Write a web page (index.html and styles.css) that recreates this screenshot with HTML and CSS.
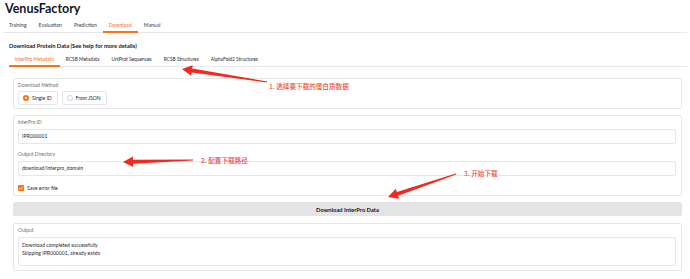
FILE: index.html
```html
<!DOCTYPE html>
<html lang="en">
<head>
    <meta charset="UTF-8">
    <meta name="viewport" content="width=device-width, initial-scale=1.0">
    <title>VenusFactory</title>
    <link rel="stylesheet" href="styles.css">
</head>
<body>

    <div class="app">
        <h1 class="title">VenusFactory</h1>

        <nav class="tabs">
            <span class="tab">Training</span>
            <span class="tab">Evaluation</span>
            <span class="tab">Prediction</span>
            <span class="tab active">Download</span>
            <span class="tab">Manual</span>
        </nav>

        <div class="section">
            <h2 class="heading">Download Protein Data (See help for more details)</h2>

            <nav class="subtabs">
                <span class="subtab active">InterPro Metadata</span>
                <span class="subtab">RCSB Metadata</span>
                <span class="subtab">UniProt Sequences</span>
                <span class="subtab">RCSB Structures</span>
                <span class="subtab">AlphaFold2 Structures</span>
            </nav>

            <div class="panel">
                <!-- download method -->
                <div class="box">
                    <div class="label">Download Method</div>
                    <div class="radios">
                        <label class="radio checked"><span class="dot"></span>Single ID</label>
                        <label class="radio"><span class="dot"></span>From JSON</label>
                    </div>
                </div>

                <!-- id + output dir -->
                <div class="box">
                    <div class="label">InterPro ID</div>
                    <div class="input">IPR000001</div>
                    <div class="label spaced">Output Directory</div>
                    <div class="input">download/interpro_domain</div>
                    <label class="check"><span class="checkbox">
                        <svg viewBox="0 0 6 6" width="6" height="6"><path d="M1.3 3.1 L2.5 4.3 L4.8 1.8" fill="none" stroke="#fff" stroke-width="0.9"/></svg>
                    </span>Save error file</label>
                </div>

                <button class="run">Download InterPro Data</button>

                <div class="box output">
                    <div class="label">Output</div>
                    <div class="textarea">Download completed successfully<br>Skipping IPR000001, already exists</div>
                </div>
            </div>
        </div>
    </div>

    <!-- annotation arrows drawn over the screenshot -->
    <svg class="notes" viewBox="0 0 690 279" width="690" height="279">
        <polygon points="267.1,81.5 192.2,68.5 192.7,65.2 182,69 191.2,75.8 191.6,72.5 266.9,82.5" />
        <polygon points="193,159.5 132.9,159.7 132.9,156.5 123,162 133.2,166.9 133.1,163.7 193,160.5" />
        <polygon points="455.8,173.5 396.9,191.9 395.8,188.8 388,197 399.2,198.8 398.1,195.7 456.2,174.5" />
        <text x="269" y="88.5">1. 选择要下载的蛋白质数据</text>
        <text x="201" y="162.5">2. 配置下载路径</text>
        <text x="464" y="175.5">3. 开始下载</text>
    </svg>

</body>
</html>
```

FILE: styles.css
```css
body {
    margin: 0;
    padding: 0;
    background: #fff;
    color: #1f2937;
    font-family: Lato, "Liberation Sans", sans-serif;
    position: relative;
    width: 690px;
    height: 279px;
    overflow: hidden;
}

.app {
    padding: 0 3px 0 5px;
}

.title {
    margin: 0;
    padding-top: 2px;
    font-size: 12.5px;
    line-height: 14px;
    font-weight: bold;
    color: #111827;
}

.tabs {
    display: flex;
    margin: 3px 0 0 -2px;
    border-bottom: 1px solid #e5e7eb;
}

.tab {
    font-size: 5.1px;
    line-height: 12px;
    padding: 0 6px;
    border-bottom: 2px solid transparent;
    margin-bottom: -1px;
    color: #374151;
}

.tab.active {
    color: #f97316;
    border-bottom-color: #f97316;
}

.section {
    padding-left: 4px;
}

.heading {
    margin: 9px 0 0;
    font-size: 5.75px;
    line-height: 8px;
    font-weight: bold;
    color: #111827;
}

.subtabs {
    display: flex;
    margin-top: 4px;
    border-bottom: 1px solid #e5e7eb;
}

.subtab {
    font-size: 4.85px;
    line-height: 11px;
    padding: 0 6px;
    border-bottom: 2px solid transparent;
    margin-bottom: -1px;
    color: #1f2937;
}

.subtab.active {
    color: #f97316;
    border-bottom-color: #f97316;
}

.panel {
    display: flex;
    flex-direction: column;
    gap: 6px;
    padding: 11px 5px 0 4px;
}

.box {
    display: flex;
    flex-direction: column;
    border: 1px solid #e5e7eb;
    border-radius: 2px;
    padding: 3px 5px 3px 4px;
}

.label {
    font-size: 4.9px;
    line-height: 7px;
    color: #6b7280;
    margin-bottom: 3px;
}

.label.spaced {
    margin-top: 7px;
}

.radios {
    display: flex;
    gap: 4px;
    margin-top: -1px;
}

.radio {
    display: flex;
    align-items: center;
    gap: 3px;
    height: 12px;
    padding: 0 5px 0 4px;
    border: 1px solid #e5e7eb;
    border-radius: 2px;
    font-size: 5px;
    color: #1f2937;
}

.dot {
    width: 4px;
    height: 4px;
    border: 1px solid #d1d5db;
    border-radius: 50%;
    background: #fff;
}

.radio.checked .dot {
    width: 2px;
    height: 2px;
    border: 2px solid #f97316;
}

.input {
    height: 13px;
    line-height: 13px;
    border: 1px solid #e5e7eb;
    border-radius: 2px;
    padding: 0 3px;
    font-size: 5.1px;
    color: #1f2937;
}

.check {
    display: flex;
    align-items: center;
    gap: 3px;
    height: 8px;
    margin-top: 8px;
    font-size: 5.1px;
    color: #1f2937;
}

.checkbox {
    display: flex;
    width: 6px;
    height: 6px;
    border-radius: 1px;
    background: #f97316;
}

.run {
    height: 14px;
    margin: 0;
    padding: 0;
    border: none;
    border-radius: 2px;
    background: #e4e4e7;
    font-family: inherit;
    font-size: 5.8px;
    font-weight: bold;
    color: #111827;
}

.output {
    margin-top: 1px;
    padding-bottom: 4px;
}

.textarea {
    height: 21px;
    border: 1px solid #e5e7eb;
    border-radius: 2px;
    padding: 3px 3px 3px;
    font-size: 5.1px;
    line-height: 8px;
    color: #1f2937;
}

.notes {
    position: absolute;
    left: 0;
    top: 0;
    pointer-events: none;
}

.notes polygon {
    fill: #f2291c;
}

.notes text {
    font-family: "Noto Sans CJK SC", sans-serif;
    font-size: 6.6px;
    font-weight: 500;
    fill: #ee4d3c;
}
```
